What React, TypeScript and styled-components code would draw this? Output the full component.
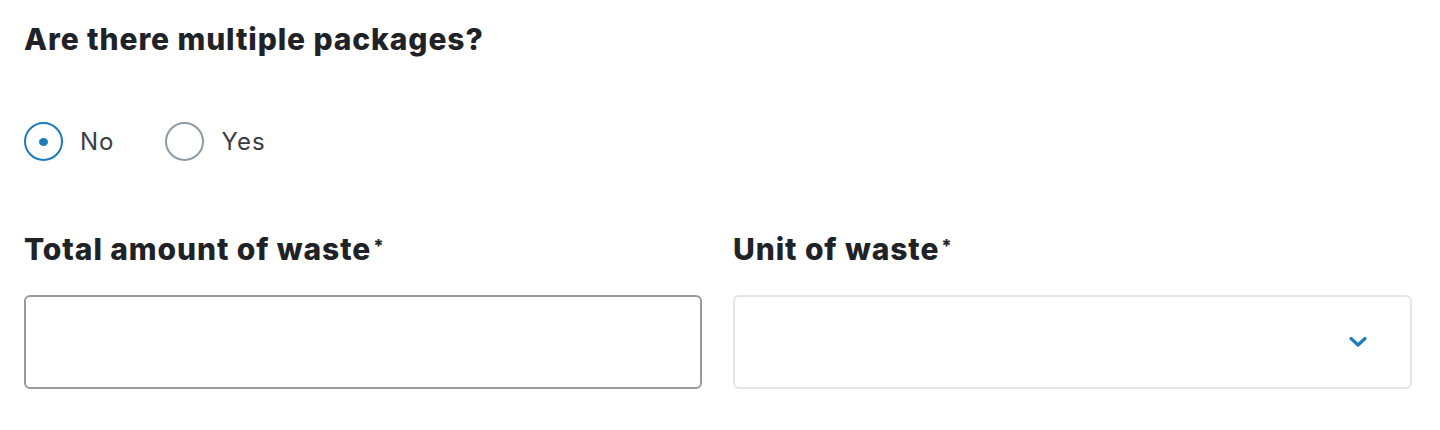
import styled, { createGlobalStyle } from 'styled-components'

const GlobalStyle = createGlobalStyle`
  html, body {
    margin: 0;
    background: #ffffff;
  }
  body {
    font-family: Inter, 'Noto Sans', Arial, sans-serif;
  }
`

const Form = styled.div`
  padding: 20px 28px 0 24px;
`

const Question = styled.h2`
  margin: 0;
  color: #1f2328;
  font-size: 30px;
  font-weight: 800;
  line-height: 38px;
  letter-spacing: 0.9px;
`

const RadioGroup = styled.div`
  display: flex;
  gap: 51px;
  align-items: center;
  margin-top: 64px;
`

const RadioOption = styled.label`
  display: flex;
  align-items: center;
  gap: 17px;
  color: #3a3d42;
  font-size: 24px;
  font-weight: 400;
  letter-spacing: 1px;
`

const RadioCircle = styled.span<{ $checked?: boolean }>`
  box-sizing: border-box;
  display: flex;
  align-items: center;
  justify-content: center;
  width: 39px;
  height: 39px;
  border-radius: 50%;
  border: 2px solid ${({ $checked }) => ($checked ? '#1c7cbd' : '#8d9ba6')};

  &::after {
    content: '';
    display: ${({ $checked }) => ($checked ? 'block' : 'none')};
    width: 9px;
    height: 8px;
    border-radius: 50%;
    background: #1c7cbd;
  }
`

const FieldGrid = styled.div`
  display: grid;
  grid-template-columns: 678px 679px;
  gap: 31px;
  margin-top: 69px;
`

const Field = styled.div`
  display: grid;
  gap: 27px;
`

const Label = styled.div`
  color: #1f2328;
  font-size: 30px;
  font-weight: 800;
  line-height: 38px;
  letter-spacing: 0.9px;

  sup {
    font-size: 18px;
    vertical-align: top;
    position: relative;
    top: -3px;
    margin-left: 2px;
  }
`

const Input = styled.div<{ $strong?: boolean }>`
  box-sizing: border-box;
  display: flex;
  align-items: center;
  justify-content: flex-end;
  height: 94px;
  padding-right: 42px;
  border-radius: 6px;
  border: 2px solid ${({ $strong }) => ($strong ? '#9a9a9a' : '#e2e5ea')};
  background: #fff;

  svg {
    color: #1c7cbd;
  }
`

export default function App() {
  return (
    <>
      <GlobalStyle />
      <Form>
        <Question>Are there multiple packages?</Question>
        <RadioGroup>
          <RadioOption>
            <RadioCircle $checked />
            No
          </RadioOption>
          <RadioOption>
            <RadioCircle />
            Yes
          </RadioOption>
        </RadioGroup>
        <FieldGrid>
          <Field>
            <Label>
              Total amount of waste<sup>*</sup>
            </Label>
            <Input $strong />
          </Field>
          <Field>
            <Label>
              Unit of waste<sup>*</sup>
            </Label>
            <Input>
              <svg width="20" height="14" viewBox="0 0 20 14" fill="none">
                <path d="M3 3.5 L10 10 L17 3.5" stroke="currentColor" strokeWidth="3.2" strokeLinecap="round" strokeLinejoin="round" />
              </svg>
            </Input>
          </Field>
        </FieldGrid>
      </Form>
    </>
  )
}
